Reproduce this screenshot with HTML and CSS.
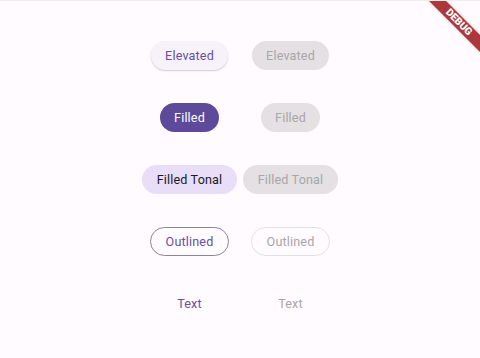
FILE: index.html
```html
<!DOCTYPE html>
<html>
<head>
<meta charset="utf-8">
<link rel="stylesheet" href="styles.css">
</head>
<body>
<div class="app">
  <div class="grid">
    <div class="cell"><button class="btn elevated">Elevated</button></div>
    <div class="cell"><button class="btn elevated disabled">Elevated</button></div>
    <div class="cell"><button class="btn filled">Filled</button></div>
    <div class="cell"><button class="btn filled disabled">Filled</button></div>
    <div class="cell"><button class="btn tonal">Filled Tonal</button></div>
    <div class="cell"><button class="btn tonal disabled">Filled Tonal</button></div>
    <div class="cell"><button class="btn outlined">Outlined</button></div>
    <div class="cell"><button class="btn outlined disabled">Outlined</button></div>
    <div class="cell"><button class="btn text">Text</button></div>
    <div class="cell"><button class="btn text disabled">Text</button></div>
  </div>
  <div class="banner"><span>DEBUG</span></div>
</div>
</body>
</html>
```
FILE: styles.css
```css
html, body {
  margin: 0;
  padding: 0;
  background: #fffbfe;
}
.app {
  position: relative;
  width: 480px;
  height: 358px;
  box-sizing: border-box;
  border-top: 1px solid #f1eef2;
  overflow: hidden;
  display: flex;
  align-items: center;
  justify-content: center;
  font-family: Roboto, "Liberation Sans", sans-serif;
}
.grid {
  display: grid;
  grid-template-columns: 94px 94px;
  column-gap: 7px;
  row-gap: 33px;
}
.cell {
  display: flex;
  justify-content: center;
  align-items: center;
}
.btn {
  height: 29px;
  padding: 0 14.4px;
  border-radius: 14.5px;
  border: none;
  font-family: Roboto, "Liberation Sans", sans-serif;
  font-size: 12.6px;
  font-weight: 400;
  letter-spacing: 0.15px;
  white-space: nowrap;
  box-sizing: border-box;
  cursor: default;
}
.elevated {
  background: #f7f2fa;
  color: #6750a4;
  box-shadow: 0 1px 1.5px rgba(0,0,0,0.14), 0 1px 3px rgba(0,0,0,0.06);
}
.filled {
  background: #5e4a9a;
  color: #ffffff;
}
.tonal {
  background: #e8def8;
  color: #1d192b;
}
.outlined {
  background: transparent;
  color: #6750a4;
  border: 1px solid #8a8590;
}
.text {
  background: transparent;
  color: #6750a4;
  padding: 0 10px;
}
.btn.disabled {
  background: #e4e0e3;
  color: #a9a6a9;
  box-shadow: none;
}
.outlined.disabled {
  background: transparent;
  border: 1px solid #e4e0e3;
}
.text.disabled {
  background: transparent;
}
.banner {
  position: absolute;
  left: 443px;
  top: 24px;
  width: 74px;
  height: 12px;
  background: #ad383c;
  transform-origin: 37px -24px;
  transform: rotate(45deg);
  display: flex;
  align-items: center;
  justify-content: center;
  box-shadow: 0 0 4px rgba(0,0,0,0.2);
}
.banner span {
  color: #ffffff;
  font-family: Roboto, "Liberation Sans", sans-serif;
  font-size: 10.2px;
  font-weight: 900;
  line-height: 1;
}
```
